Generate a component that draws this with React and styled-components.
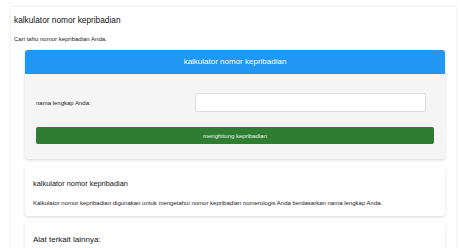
import React, { useState } from 'react'
import styled, { createGlobalStyle } from 'styled-components'

const GlobalStyle = createGlobalStyle`
  html, body {
    margin: 0;
    background: #fff;
    font-family: "Liberation Sans", Arial, sans-serif;
    color: #222;
  }
  ::-webkit-scrollbar {
    width: 7px;
  }
  ::-webkit-scrollbar-track {
    background: #f1f1f1;
  }
  ::-webkit-scrollbar-thumb {
    background: #c1c1c1;
  }
`

const App = () => {
  const [name, setName] = useState('')

  return (
    <>
      <GlobalStyle />
      <Spage>
        <Scard>
          <Stitle>kalkulator nomor kepribadian</Stitle>
          <Sintro>Cari tahu nomor kepribadian Anda.</Sintro>

          <Scalculator>
            <ScalcHeader>kalkulator nomor kepribadian</ScalcHeader>
            <ScalcBody>
              <SformRow>
                <Slabel htmlFor='fullName'>nama lengkap Anda:</Slabel>
                <Sinput
                  id='fullName'
                  type='text'
                  value={name}
                  onChange={e => setName(e.target.value)}
                />
              </SformRow>
              <Sbutton type='button'>menghitung kepribadian</Sbutton>
            </ScalcBody>
          </Scalculator>

          <Spanel>
            <SpanelTitle>kalkulator nomor kepribadian</SpanelTitle>
            <SpanelText>
              Kalkulator nomor kepribadian digunakan untuk mengetahui nomor kepribadian numerologis Anda berdasarkan nama lengkap Anda.
            </SpanelText>
          </Spanel>

          <Spanel tall>
            <SpanelTitle big>Alat terkait lainnya:</SpanelTitle>
          </Spanel>
        </Scard>
      </Spage>
    </>
  )
}

const Spage = styled.div`
  padding: 7px 18px 8px 11px;
`
const Scard = styled.div`
  background: #fff;
  box-shadow: 0 0 3px rgba(0, 0, 0, 0.12);
  padding: 0 11px 10px 14px;
`
const Stitle = styled.h1`
  font-size: 8.3px;
  font-weight: normal;
  margin: 0;
  padding-top: 8px;
  margin-left: -11px;
  line-height: 10px;
  color: #111;
`
const Sintro = styled.p`
  font-size: 6px;
  margin: 10px 0 0 -11px;
  line-height: 8px;
`
const Scalculator = styled.div`
  margin-top: 7px;
  border-radius: 3px;
  background: #f5f5f5;
  box-shadow: 0 1px 3px rgba(0, 0, 0, 0.18);
`
const ScalcHeader = styled.div`
  background: #2196f3;
  color: #fff;
  border-radius: 3px 3px 0 0;
  height: 24px;
  line-height: 24px;
  text-align: center;
  font-size: 8px;
`
const ScalcBody = styled.div`
  padding: 19px 11px 15px 11px;
`
const SformRow = styled.div`
  display: grid;
  grid-template-columns: 40% 60%;
  align-items: center;
`
const Slabel = styled.label`
  font-size: 6px;
  color: #222;
`
const Sinput = styled.input`
  box-sizing: border-box;
  height: 19px;
  width: calc(100% - 8px);
  border: 1px solid #ddd;
  border-radius: 2px;
  background: #fff;
  outline: none;
`
const Sbutton = styled.button`
  display: block;
  width: 100%;
  height: 17px;
  margin-top: 15px;
  border: none;
  border-radius: 2px;
  background: #2e7d32;
  color: #e8f5e9;
  font-family: inherit;
  font-size: 6px;
  cursor: pointer;
`
const Spanel = styled.div`
  margin-top: 8px;
  background: #fff;
  border-radius: 3px;
  box-shadow: 0 1px 3px rgba(0, 0, 0, 0.16);
  padding: 12px 8px 9px 8px;
  min-height: ${props => props.tall ? '110px' : 'auto'};

  & + & {
    margin-top: 7px;
  }
`
const SpanelTitle = styled.h2`
  font-size: ${props => props.big ? '8px' : '7.4px'};
  font-weight: normal;
  margin: 0;
  line-height: 10px;
  color: #111;
`
const SpanelText = styled.p`
  font-size: 6px;
  margin: 10px 0 0 0;
  line-height: 8px;
`

export default App
